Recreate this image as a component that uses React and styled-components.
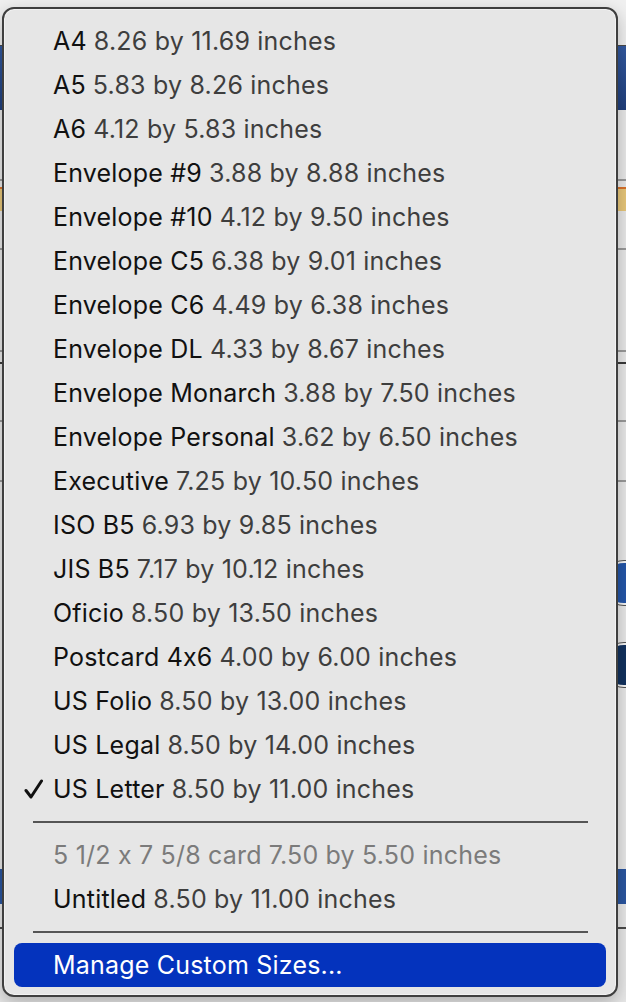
import styled, { createGlobalStyle } from "styled-components";

const Global = createGlobalStyle`
  html, body { margin: 0; padding: 0; }
  body {
    background: #ececec;
    font-family: Inter, "Noto Sans", "Liberation Sans", sans-serif;
    font-feature-settings: "calt" 0;
    -webkit-font-smoothing: antialiased;
  }
`;

const Screen = styled.div`
  position: relative;
  width: 626px;
  height: 1002px;
  overflow: hidden;
  background: #e8e8e8;
`;

const Toolbar = styled.div`
  height: 45px;
  background: #f0f0f0;
  border-bottom: 1px solid #4a4a4a;
  display: flex;
  align-items: flex-start;
  padding-left: 284px;
  gap: 14px;
`;

const Dot = styled.span`
  width: ${(p) => p.size}px;
  height: ${(p) => p.size}px;
  margin-top: ${(p) => p.top}px;
  margin-right: ${(p) => p.after || 0}px;
  border-radius: 50%;
  background: ${(p) => p.color};
`;

const Banner = styled.div`
  height: 64px;
  background: linear-gradient(#3259a0, #203f7c);
`;

const Band = styled.div`
  height: ${(p) => p.h}px;
  background: ${(p) => p.bg || "#e9e9e9"};
  border-bottom: ${(p) => (p.line ? `2px solid ${p.line}` : "none")};
  border-top: ${(p) => (p.top ? `2px solid ${p.top}` : "none")};
  display: flex;
  justify-content: flex-end;
  align-items: center;
`;

const RoundButton = styled.span`
  width: 40px;
  height: 40px;
  margin-right: -20px;
  border-radius: 50%;
  background: ${(p) => p.color};
  border: 2px solid #f4f4f4;
  box-shadow: 0 0 0 1px #555;
`;

const Menu = styled.div`
  position: absolute;
  top: 7px;
  left: 2px;
  width: 612px;
  padding: 10px 0 8px;
  background: #e6e6e6;
  border: 2px solid #3f3f3f;
  border-radius: 12px;
  box-shadow: inset 0 0 0 1px #f2f2f2, 0 6px 18px rgba(0, 0, 0, 0.25);
`;

const Item = styled.div`
  height: 44px;
  margin: 0 10px;
  padding-left: 10px;
  display: flex;
  align-items: center;
  border-radius: 8px;
  font-size: 25px;
  letter-spacing: 0.2px;
  white-space: nowrap;
  background: ${(p) => (p.active ? "#0433bd" : "transparent")};
  color: ${(p) => (p.active ? "#ffffff" : p.disabled ? "#7b7b7b" : "#111111")};
`;

const CheckSlot = styled.span`
  width: 29px;
  flex: none;
  display: flex;
  align-items: center;
`;

const Dims = styled.span`
  color: ${(p) => (p.disabled ? "#7b7b7b" : "#3e3e3e")};
  margin-left: 7px;
`;

const Separator = styled.div`
  padding: 10px 0;
  margin: 0 28px 0 29px;
  &::after {
    content: "";
    display: block;
    height: 2px;
    background: #555555;
  }
`;

const Check = () => (
  <svg width="19" height="20" viewBox="0 0 19 20">
    <path
      d="M2 11.5 L7 18 L17.5 2"
      fill="none"
      stroke="#111"
      strokeWidth="3"
      strokeLinecap="round"
      strokeLinejoin="round"
    />
  </svg>
);

const sizes = [
  ["A4", "8.26 by 11.69 inches"],
  ["A5", "5.83 by 8.26 inches"],
  ["A6", "4.12 by 5.83 inches"],
  ["Envelope #9", "3.88 by 8.88 inches"],
  ["Envelope #10", "4.12 by 9.50 inches"],
  ["Envelope C5", "6.38 by 9.01 inches"],
  ["Envelope C6", "4.49 by 6.38 inches"],
  ["Envelope DL", "4.33 by 8.67 inches"],
  ["Envelope Monarch", "3.88 by 7.50 inches"],
  ["Envelope Personal", "3.62 by 6.50 inches"],
  ["Executive", "7.25 by 10.50 inches"],
  ["ISO B5", "6.93 by 9.85 inches"],
  ["JIS B5", "7.17 by 10.12 inches"],
  ["Oficio", "8.50 by 13.50 inches"],
  ["Postcard 4x6", "4.00 by 6.00 inches"],
  ["US Folio", "8.50 by 13.00 inches"],
  ["US Legal", "8.50 by 14.00 inches"],
  ["US Letter", "8.50 by 11.00 inches", true],
];

const App = () => {
  return (
    <>
      <Global />
      <Screen>
        <Toolbar>
          <Dot size={7} top={38} color="#d22a1e" />
          <Dot size={7} top={38} color="#d22a1e" after={70} />
          <Dot size={18} top={30} color="#111" after={60} />
          <Dot size={18} top={30} color="#777" after={70} />
          <Dot size={12} top={34} color="#111" />
        </Toolbar>
        <Banner />
        <Band h={69} line="#9a9a9a" />
        <Band h={6} />
        <Band h={22} bg="#e8c77a" top="#d9722b" />
        <Band h={37} line="#9a9a9a" />
        <Band h={100} line="#9a9a9a" />
        <Band h={10} line="#3a3a3a" />
        <Band h={56} line="#9a9a9a" />
        <Band h={58} line="#9a9a9a" />
        <Band h={60} />
        <Band h={82}>
          <RoundButton color="#2456a8" />
        </Band>
        <Band h={82}>
          <RoundButton color="#12325f" />
        </Band>
        <Band h={163} />
        <Band h={35} bg="#2a56a0" />
        <Band h={23} line="#4a4a4a" />

        <Menu>
          {sizes.map(([name, dims, checked]) => (
            <Item key={name}>
              <CheckSlot>{checked && <Check />}</CheckSlot>
              {name}
              <Dims>{dims}</Dims>
            </Item>
          ))}
          <Separator />
          <Item disabled>
            <CheckSlot />
            5 1/2 x 7 5/8 card
            <Dims disabled>7.50 by 5.50 inches</Dims>
          </Item>
          <Item>
            <CheckSlot />
            Untitled
            <Dims>8.50 by 11.00 inches</Dims>
          </Item>
          <Separator />
          <Item active>
            <CheckSlot />
            Manage Custom Sizes...
          </Item>
        </Menu>
      </Screen>
    </>
  );
};

export default App;
